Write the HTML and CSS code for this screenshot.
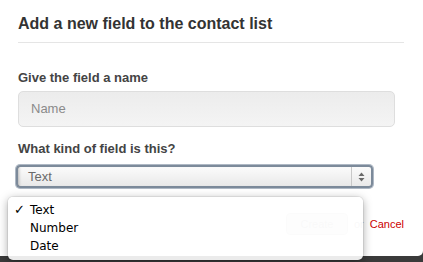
FILE: index.html
```html
<!DOCTYPE html>
<html>
<head>
<meta charset="utf-8">
<link rel="stylesheet" href="styles.css">
</head>
<body>
<div class="modal">
  <div class="header"><h3 class="title">Add a new field to the contact list</h3></div>
  <div class="body">
    <label class="label">Give the field a name</label>
    <div class="input">Name</div>
    <label class="label label2">What kind of field is this?</label>
    <div class="select">
      <span class="select-text">Text</span>
      <span class="select-arrows"><svg width="7" height="10" viewBox="0 0 7 10"><path d="M3.5 0.5 L6.5 4 L0.5 4 Z M0.5 6 L6.5 6 L3.5 9.5 Z" fill="#6a6a6a"/></svg></span>
    </div>
  </div>
  <div class="footer">
    <span class="btn">Create</span>
    <span class="or">or</span>
    <a class="cancel">Cancel</a>
  </div>
  <div class="popup">
    <div class="item"><span class="check">✓</span>Text</div>
    <div class="item"><span class="check"></span>Number</div>
    <div class="item"><span class="check"></span>Date</div>
  </div>
</div>
</body>
</html>
```
FILE: styles.css
```css
html, body {
  margin: 0;
  padding: 0;
}
body {
  background: #3a3a3a;
  width: 423px;
  height: 262px;
  overflow: hidden;
  font-family: "Liberation Sans", Arial, sans-serif;
}
.modal {
  position: relative;
  background: #ffffff;
  height: 256px;
  width: 423px;
  border-radius: 0 0 5px 0;
  box-sizing: border-box;
  padding-left: 18px;
}
.header {
  margin-right: 19px;
  padding-top: 14px;
  padding-bottom: 8px;
  border-bottom: 1px solid #e5e5e5;
}
.title {
  margin: 0;
  font-size: 16px;
  line-height: 20px;
  font-weight: bold;
  color: #333333;
}
.body {
  display: flex;
  flex-direction: column;
  align-items: flex-start;
  padding-top: 26px;
}
.label {
  display: block;
  font-size: 13px;
  line-height: 18px;
  font-weight: bold;
  color: #444444;
}
.input {
  margin-top: 4px;
  width: 377px;
  height: 36px;
  box-sizing: border-box;
  border: 1px solid #dedede;
  border-radius: 5px;
  background: linear-gradient(#ececec, #f4f4f4);
  color: #8a8a8a;
  font-size: 13px;
  line-height: 34px;
  padding-left: 12px;
}
.label2 {
  margin-top: 13px;
}
.select {
  margin-top: 7px;
  margin-left: -2px;
  width: 357px;
  height: 23px;
  box-sizing: border-box;
  border: 2px solid #7c8a9a;
  border-radius: 4px;
  box-shadow: 0 0 0 1px #aeb8c4;
  background: linear-gradient(#fbfbfb, #e9e9e9);
  display: flex;
  align-items: center;
}
.select-text {
  flex: 1;
  padding-left: 10px;
  font-size: 13px;
  color: #6a6a6a;
  box-shadow: inset 3px 0 3px -2px rgba(0,0,0,0.25);
  height: 100%;
  line-height: 19px;
}
.select-arrows {
  width: 19px;
  height: 100%;
  border-left: 1px solid #c8c8c8;
  display: flex;
  align-items: center;
  justify-content: center;
}
.footer {
  margin-top: 25px;
  margin-right: 19px;
  display: flex;
  justify-content: flex-end;
  align-items: center;
}
.btn {
  width: 62px;
  height: 22px;
  box-sizing: border-box;
  border: 1px solid #d6d6d6;
  border-radius: 4px;
  background: #e8e8e8;
  color: #bdbdbd;
  font-size: 11px;
  line-height: 20px;
  text-align: center;
}
.or {
  margin-left: 6px;
  font-size: 11px;
  color: #bbbbbb;
}
.cancel {
  margin-left: 6px;
  font-size: 11px;
  color: #cc0000;
}
.popup {
  position: absolute;
  left: 8px;
  top: 197px;
  width: 355px;
  height: 63px;
  box-sizing: border-box;
  padding-top: 4px;
  background: rgba(255,255,255,0.9);
  border-radius: 5px;
  box-shadow: 0 2px 10px rgba(0,0,0,0.35), 0 0 0 1px rgba(0,0,0,0.06);
  font-family: "DejaVu Sans", sans-serif;
  font-size: 12px;
  color: #000000;
}
.item {
  display: flex;
  line-height: 18px;
  height: 18px;
}
.check {
  width: 22px;
  padding-left: 6px;
  box-sizing: border-box;
  font-size: 13px;
  font-weight: bold;
}
```
